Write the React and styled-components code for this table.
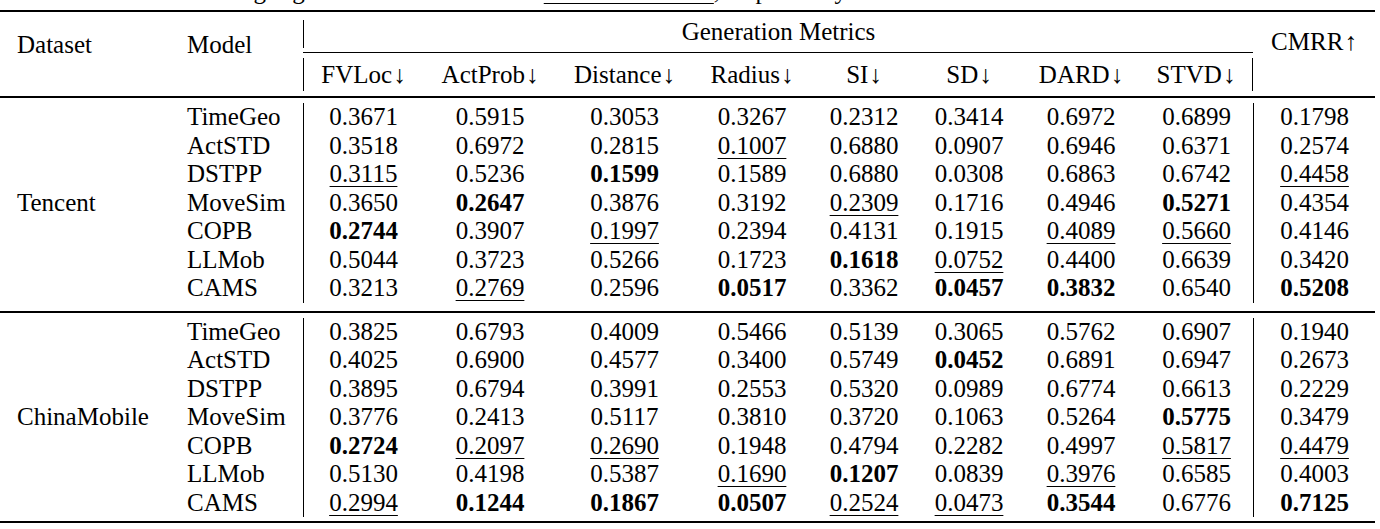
import React from "react";
import styled, { createGlobalStyle } from "styled-components";

const GlobalStyle = createGlobalStyle`
  body {
    margin: 0;
    background: #fff;
  }
`;

const COLS = [170, 133, 120, 134, 135, 120, 104, 106, 118, 113, 122];
const METRICS = ["FVLoc", "ActProb", "Distance", "Radius", "SI", "SD", "DARD", "STVD"];

// "*" = best (bold), "_" = second best (underlined)
const DATA = [
  {
    name: "Tencent",
    rows: [
      ["TimeGeo", "0.3671", "0.5915", "0.3053", "0.3267", "0.2312", "0.3414", "0.6972", "0.6899", "0.1798"],
      ["ActSTD", "0.3518", "0.6972", "0.2815", "_0.1007", "0.6880", "0.0907", "0.6946", "0.6371", "0.2574"],
      ["DSTPP", "_0.3115", "0.5236", "*0.1599", "0.1589", "0.6880", "0.0308", "0.6863", "0.6742", "_0.4458"],
      ["MoveSim", "0.3650", "*0.2647", "0.3876", "0.3192", "_0.2309", "0.1716", "0.4946", "*0.5271", "0.4354"],
      ["COPB", "*0.2744", "0.3907", "_0.1997", "0.2394", "0.4131", "0.1915", "_0.4089", "_0.5660", "0.4146"],
      ["LLMob", "0.5044", "0.3723", "0.5266", "0.1723", "*0.1618", "_0.0752", "0.4400", "0.6639", "0.3420"],
      ["CAMS", "0.3213", "_0.2769", "0.2596", "*0.0517", "0.3362", "*0.0457", "*0.3832", "0.6540", "*0.5208"],
    ],
  },
  {
    name: "ChinaMobile",
    rows: [
      ["TimeGeo", "0.3825", "0.6793", "0.4009", "0.5466", "0.5139", "0.3065", "0.5762", "0.6907", "0.1940"],
      ["ActSTD", "0.4025", "0.6900", "0.4577", "0.3400", "0.5749", "*0.0452", "0.6891", "0.6947", "0.2673"],
      ["DSTPP", "0.3895", "0.6794", "0.3991", "0.2553", "0.5320", "0.0989", "0.6774", "0.6613", "0.2229"],
      ["MoveSim", "0.3776", "0.2413", "0.5117", "0.3810", "0.3720", "0.1063", "0.5264", "*0.5775", "0.3479"],
      ["COPB", "*0.2724", "_0.2097", "_0.2690", "0.1948", "0.4794", "0.2282", "0.4997", "_0.5817", "_0.4479"],
      ["LLMob", "0.5130", "0.4198", "0.5387", "_0.1690", "*0.1207", "0.0839", "_0.3976", "0.6585", "0.4003"],
      ["CAMS", "_0.2994", "*0.1244", "*0.1867", "*0.0507", "_0.2524", "_0.0473", "*0.3544", "0.6776", "*0.7125"],
    ],
  },
];

const Page = styled.div`
  width: 1380px;
  height: 529px;
  overflow: hidden;
  font-family: "Liberation Serif", "Times New Roman", serif;
  font-size: 25px;
  color: #000;
`;

// only the descenders of the caption line above the table are in view
const Caption = styled.div`
  height: 10px;
  overflow: hidden;
  white-space: nowrap;
  padding-left: 234px;
`;

const CaptionText = styled.div`
  line-height: 30px;
  margin-top: -24px;
`;

const Table = styled.table`
  border-collapse: separate;
  border-spacing: 0;
  table-layout: fixed;
  width: 1375px;
`;

const Line = styled.div`
  height: ${(p) => p.$h || 2}px;
  background: #000;
  margin: ${(p) => p.$above || 0}px 0 ${(p) => p.$below || 0}px;
`;

const RuleCell = styled.td`
  padding: 0;
`;

const Head = styled.th`
  padding: 0;
  font-weight: normal;
  white-space: nowrap;
  text-align: ${(p) => (p.$left ? "left" : "center")};
  padding-left: ${(p) => (p.$left ? "17px" : "0")};
  border-left: ${(p) => (p.$barLeft ? "1px solid #000" : "none")};
  border-right: ${(p) => (p.$barRight ? "1px solid #000" : "none")};
`;

const SpanHead = styled(Head)`
  vertical-align: top;
  padding-top: ${(p) => p.$top}px;
  line-height: 28px;
`;

const GroupHead = styled(Head)`
  height: 24px;
  line-height: 24px;
  padding-bottom: 4px;
`;

const MetricHead = styled(Head)`
  height: 33px;
  line-height: 33px;
`;

const Cell = styled.td`
  padding: 0;
  height: 28.5px;
  line-height: 28.5px;
  white-space: nowrap;
  text-align: ${(p) => (p.$left ? "left" : "center")};
  padding-left: ${(p) => (p.$left ? "17px" : "0")};
  border-left: ${(p) => (p.$bar ? "1px solid #000" : "none")};
`;

const GroupCell = styled(Cell)`
  vertical-align: middle;
`;

const Best = styled.b`
  font-weight: bold;
`;

const Second = styled.span`
  text-decoration: underline;
  text-decoration-thickness: 1px;
  text-underline-offset: 4px;
`;

const Arrow = styled.span`
  display: inline-block;
  margin-left: 1px;
`;

function Value({ v }) {
  if (v[0] === "*") return <Best>{v.slice(1)}</Best>;
  if (v[0] === "_") return <Second>{v.slice(1)}</Second>;
  return v;
}

function Block({ group }) {
  return group.rows.map((row, i) => (
    <tr key={row[0]}>
      {i === 0 && (
        <GroupCell $left rowSpan={7}>
          {group.name}
        </GroupCell>
      )}
      <Cell $left>{row[0]}</Cell>
      {row.slice(1).map((v, j) => (
        <Cell key={j} $bar={j === 0 || j === 8}>
          <Value v={v} />
        </Cell>
      ))}
    </tr>
  ));
}

function Rule({ above, h, below }) {
  return (
    <tr>
      <RuleCell colSpan={11}>
        <Line $above={above} $h={h} $below={below} />
      </RuleCell>
    </tr>
  );
}

export default function App() {
  return (
    <Page>
      <GlobalStyle />
      <Caption>
        <CaptionText>
          highlighted in <b>bold</b> and all the <Second>second-best ones</Second>, respectively.
        </CaptionText>
      </Caption>
      <Table>
        <colgroup>
          {COLS.map((w, i) => (
            <col key={i} style={{ width: w }} />
          ))}
        </colgroup>
        <tbody>
          <Rule above={0} h={2} below={8} />
          <tr>
            <SpanHead $left rowSpan={3} $top={11}>
              Dataset
            </SpanHead>
            <SpanHead $left rowSpan={3} $top={11}>
              Model
            </SpanHead>
            <GroupHead colSpan={8} $barLeft>
              Generation Metrics
            </GroupHead>
            <SpanHead rowSpan={3} $top={8}>
              CMRR<Arrow>↑</Arrow>
            </SpanHead>
          </tr>
          <tr>
            <RuleCell colSpan={8}>
              <Line $above={4} $h={1} $below={5} />
            </RuleCell>
          </tr>
          <tr>
            {METRICS.map((m, i) => (
              <MetricHead key={m} $barLeft={i === 0} $barRight={i === 7}>
                {m}
                <Arrow>↓</Arrow>
              </MetricHead>
            ))}
          </tr>
          <Rule above={5} h={2} below={5} />
          <Block group={DATA[0]} />
          <Rule above={8} h={2} below={5} />
          <Block group={DATA[1]} />
          <Rule above={4} h={2} below={6} />
        </tbody>
      </Table>
    </Page>
  );
}
